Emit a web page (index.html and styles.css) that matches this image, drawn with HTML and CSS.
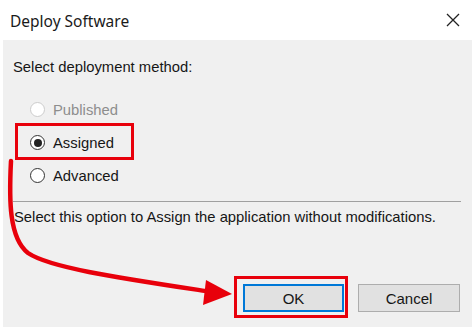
FILE: index.html
```html
<!DOCTYPE html>
<html>
<head>
<meta charset="utf-8">
<link rel="stylesheet" href="styles.css">
</head>
<body>
<div class="window">
  <div class="titlebar">
    <span class="title">Deploy Software</span>
    <svg class="close" width="14" height="14" viewBox="0 0 14 14"><path d="M1 1 L13 13 M13 1 L1 13" stroke="#222" stroke-width="1.3" fill="none"/></svg>
  </div>
  <div class="client">
    <div class="heading">Select deployment method:</div>
    <div class="options">
      <label class="option disabled"><span class="radio"></span>Published</label>
      <label class="option checked"><span class="radio"></span>Assigned</label>
      <label class="option"><span class="radio"></span>Advanced</label>
    </div>
    <div class="separator"></div>
    <div class="desc">Select this option to Assign the application without modifications.</div>
    <div class="buttons">
      <button class="btn default">OK</button>
      <button class="btn">Cancel</button>
    </div>
  </div>
  <div class="hl hl-assigned"></div>
  <div class="hl hl-ok"></div>
  <svg class="arrow" width="474" height="331" viewBox="0 0 474 331">
    <path d="M11 161 C 9 200, 9 238, 28 253 C 50 268, 120 278, 212 292" stroke="#e8000b" stroke-width="4.5" fill="none" stroke-linecap="round"/>
    <polygon points="206,280 203,305 232,294" fill="#e8000b"/>
  </svg>
</div>
</body>
</html>
```
FILE: styles.css
```css
html, body {
  margin: 0;
  padding: 0;
  background: #ffffff;
}
.window {
  position: relative;
  width: 474px;
  height: 331px;
  overflow: hidden;
  font-family: "Liberation Sans", Arial, sans-serif;
  color: #161616;
}
.titlebar {
  height: 40px;
  display: flex;
  align-items: center;
  justify-content: space-between;
  padding: 0 14px 0 10px;
}
.title {
  font-family: "Noto Sans", "Open Sans", sans-serif;
  font-size: 15.5px;
  color: #1a1a1a;
  margin-top: 1px;
}
.client {
  margin: 0 2px 0 3px;
  height: 287px;
  background: #f0f0f0;
  padding: 17px 0 0 10px;
  box-sizing: border-box;
  font-size: 14.8px;
}
.heading {
  line-height: 20px;
}
.options {
  margin-top: 16px;
  display: flex;
  flex-direction: column;
}
.option {
  height: 33px;
  display: flex;
  align-items: center;
  padding-left: 17px;
  gap: 8px;
}
.radio {
  width: 13px;
  height: 13px;
  border: 1px solid #333;
  border-radius: 50%;
  background: #fff;
  box-sizing: content-box;
  display: flex;
  align-items: center;
  justify-content: center;
}
.option.checked .radio::after {
  content: "";
  width: 8px;
  height: 8px;
  border-radius: 50%;
  background: #222;
}
.option.disabled {
  color: #8d8d8d;
}
.option.disabled .radio {
  border-color: #cccccc;
}
.separator {
  margin: 9px 11px 0 0;
  height: 1px;
  background: #a0a0a0;
}
.desc {
  margin-top: 5px;
  line-height: 20px;
  padding-left: 1px;
}
.buttons {
  margin-top: 57px;
  display: flex;
  justify-content: flex-end;
  gap: 14px;
  padding-right: 12px;
}
.btn {
  width: 102px;
  height: 28px;
  background: #e1e1e1;
  border: 1px solid #adadad;
  font-family: "Liberation Sans", Arial, sans-serif;
  font-size: 15px;
  color: #161616;
  padding: 0;
}
.btn.default {
  border: 2px solid #0078d7;
  width: 101px;
}
.hl {
  position: absolute;
  border: 3px solid #e8000b;
  box-sizing: border-box;
}
.hl-assigned {
  left: 15px;
  top: 123px;
  width: 119px;
  height: 37px;
}
.hl-ok {
  left: 234px;
  top: 276px;
  width: 114px;
  height: 42px;
}
.arrow {
  position: absolute;
  left: 0;
  top: 0;
  pointer-events: none;
}
```
